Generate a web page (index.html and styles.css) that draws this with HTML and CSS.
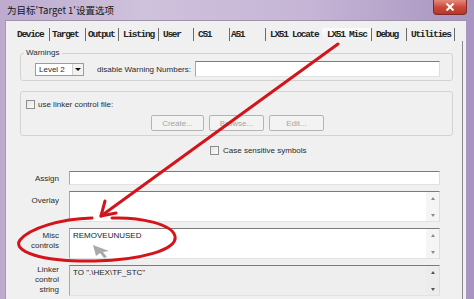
FILE: index.html
```html
<!DOCTYPE html>
<html lang="zh-CN">
<head>
    <meta charset="UTF-8">
    <title>为目标'Target 1'设置选项</title>
    <link rel="stylesheet" href="styles.css">
</head>
<body>

<div class="window">
    <div class="titlebar">
        <span class="title">为目标'Target 1'设置选项</span>
        <span class="close">
            <svg width="10" height="8" viewBox="0 0 10 8"><path d="M1.5 0.5 L8.5 7.5 M8.5 0.5 L1.5 7.5" stroke="#fff" stroke-width="2"/></svg>
        </span>
    </div>

    <div class="client">
        <div class="tabs">
            <span class="tab tab-device">Device</span>
            <span class="tab tab-target">Target</span>
            <span class="tab tab-output">Output</span>
            <span class="tab tab-listing">Listing</span>
            <span class="tab tab-user">User</span>
            <span class="tab tab-c51">C51</span>
            <span class="tab tab-a51">A51</span>
            <span class="tab tab-locate">LX51 Locate</span>
            <span class="tab tab-misc active">LX51 Misc</span>
            <span class="tab tab-debug">Debug</span>
            <span class="tab tab-utilities">Utilities</span>
        </div>

        <div class="panel">
            <fieldset class="group warnings">
                <legend>Warnings</legend>
                <div class="row">
                    <div class="combo">
                        <span class="combo-text">Level 2</span>
                        <span class="combo-btn"></span>
                    </div>
                    <span class="caption">disable Warning Numbers:</span>
                    <div class="edit edit-wide"></div>
                </div>
            </fieldset>

            <div class="group linker-file">
                <div class="check"><span class="box"></span>use linker control file:</div>
                <div class="buttons">
                    <button class="btn btn-create" disabled>Create...</button>
                    <button class="btn" disabled>Browse...</button>
                    <button class="btn" disabled>Edit...</button>
                </div>
            </div>

            <div class="check case"><span class="box"></span>Case sensitive symbols</div>

            <div class="fields">
                <div class="field">
                    <span class="field-label">Assign</span>
                    <div class="edit edit-single"></div>
                </div>
                <div class="field multi">
                    <span class="field-label label-overlay">Overlay</span>
                    <div class="edit edit-multi">
                        <div class="edit-text"></div>
                        <div class="scroll"><span class="up"></span><span class="down"></span></div>
                    </div>
                </div>
                <div class="field multi">
                    <span class="field-label label-misc">Misc<br>controls</span>
                    <div class="edit edit-multi">
                        <div class="edit-text">REMOVEUNUSED</div>
                        <div class="scroll"><span class="up"></span><span class="down"></span></div>
                    </div>
                </div>
                <div class="field multi">
                    <span class="field-label label-linker">Linker<br>control<br>string</span>
                    <div class="edit edit-multi readonly">
                        <div class="edit-text">TO ".\HEX\TF_STC"</div>
                        <div class="scroll"><span class="up"></span><span class="down"></span></div>
                    </div>
                </div>
            </div>
        </div>
    </div>

    <!-- red marks drawn over the dialog -->
    <svg class="annotation" width="474" height="299" viewBox="0 0 474 299">
        <g fill="none" stroke="#d3141b" stroke-width="3" stroke-linecap="round" stroke-linejoin="round">
            <path d="M338 44 L101 216"/>
            <path d="M105 201 L101 216 L116 213"/>
            <path d="M92 218 C60 219 30 228 20 240 C12 251 40 262 95 261 C140 260 178 250 175 236 C172 224 140 217 112 218"/>
        </g>
        <path d="M93 245 L109 251 L103 252 L107 257 L104 258 L100 253 L96 256 Z" fill="#7d7d7d" opacity="0.65"/>
    </svg>
</div>

</body>
</html>
```

FILE: styles.css
```css
* {
    box-sizing: border-box;
}

body {
    margin: 0;
    font-family: "Liberation Sans", Arial, sans-serif;
    font-size: 8px;
    color: #2b2b2b;
}

.window {
    position: relative;
    width: 474px;
    height: 299px;
    overflow: hidden;
    display: flex;
    flex-direction: column;
    background: linear-gradient(90deg, #bcaacf 0%, #cfc2dc 30%, #c6b5d6 65%, #a894c0 100%);
}

.titlebar {
    flex: none;
    height: 20px;
    display: flex;
    align-items: flex-start;
    padding-left: 7px;
}

.title {
    margin-top: 4px;
    font-family: "Noto Sans CJK SC", sans-serif;
    font-size: 9.5px;
    line-height: 12px;
    color: #151515;
}

.close {
    margin-left: auto;
    margin-right: 7px;
    width: 34px;
    height: 15px;
    display: flex;
    align-items: center;
    justify-content: center;
    background: linear-gradient(#e48a7b, #cc4a3c 50%, #b7352b);
    border: 1px solid #7e2b27;
    border-top: none;
    border-radius: 0 0 4px 4px;
}

.client {
    flex: 1;
    margin: 0 8px 0 5px;
    display: flex;
    flex-direction: column;
    background: #f0f0f0;
    border-top: 1px solid #9d93aa;
    border-left: 1px solid #a698b7;
}

/* tab strip */
.tabs {
    flex: none;
    display: flex;
    padding: 7px 0 0 6px;
    height: 20px;
}

.tab {
    height: 13px;
    line-height: 13px;
    padding-left: 4px;
    border-right: 1px solid #6a6a6a;
    font-family: "Liberation Mono", "DejaVu Sans Mono", monospace;
    font-size: 9.5px;
    font-weight: bold;
    letter-spacing: -1.3px;
    color: #222;
    white-space: nowrap;
}

.tab-device { width: 38px; padding-left: 5px; }
.tab-target { width: 36px; padding-left: 2px; }
.tab-output { width: 33px; padding-left: 2px; }
.tab-listing { width: 40px; }
.tab-user { width: 35px; }
.tab-c51 { width: 36px; }
.tab-a51 { width: 36px; padding-left: 1px; }
.tab-locate { width: 56px; border-right: none; }
.tab-misc { width: 50px; padding-left: 5px; }
.tab-debug { width: 35px; }
.tab-utilities { width: 48px; }

.tab.active {
    background: linear-gradient(#fbfbfb, #f0f0f0);
}

/* property page */
.panel {
    flex: 1;
    margin-right: 3px;
    padding: 0 9px 0 14px;
    border-right: 1px solid #8a8a8a;
}

.group {
    margin: 0;
    border: 1px solid #d3d3d3;
    border-radius: 3px;
}

.warnings {
    margin-top: 7px;
    padding: 3px 12px 3px 14px;
}

.warnings legend {
    margin-left: -11px;
    padding: 0 2px;
    line-height: 10px;
}

.row {
    display: flex;
    align-items: center;
    height: 16px;
}

.combo {
    flex: none;
    display: flex;
    align-items: center;
    width: 49px;
    height: 13px;
    background: #fff;
    border: 1px solid #9c9c9c;
}

.combo-text {
    flex: 1;
    padding-left: 3px;
}

.combo-btn {
    width: 11px;
    height: 11px;
    display: flex;
    align-items: center;
    justify-content: center;
    background: #f2f2f2;
    border-left: 1px solid #d0d0d0;
}

.combo-btn::after {
    content: "";
    border-left: 3px solid transparent;
    border-right: 3px solid transparent;
    border-top: 3px solid #111;
}

.caption {
    margin-left: 13px;
    white-space: nowrap;
}

.edit {
    background: #fff;
    border-top: 1px solid #7b7b7b;
    border-left: 1px solid #a9a9a9;
    border-right: 1px solid #dedede;
    border-bottom: 1px solid #e2e2e2;
}

.edit-wide {
    flex: 1;
    margin-left: 4px;
    height: 16px;
}

.linker-file {
    margin-top: 10px;
    padding: 7px 0 4px 5px;
}

.check {
    display: flex;
    align-items: center;
    height: 10px;
    gap: 3px;
}

.box {
    width: 9px;
    height: 9px;
    background: linear-gradient(135deg, #e4e4e4, #fdfdfd);
    border: 1px solid #8e8e8e;
}

.buttons {
    display: flex;
    gap: 5px;
    margin-top: 6px;
    padding-left: 125px;
}

.btn {
    width: 55px;
    height: 16px;
    padding: 0;
    font-family: inherit;
    font-size: 8px;
    color: #a4a4a4;
    background: #f3f3f3;
    border: 1px solid #b4b4b4;
    border-radius: 2px;
}

.btn-create {
    width: 53px;
}

.case {
    margin-top: 9px;
    padding-left: 190px;
    gap: 4px;
}

.fields {
    margin-top: 16px;
}

.field {
    display: flex;
    gap: 10px;
}

.field.multi {
    margin-top: 6px;
}

.field-label {
    width: 39px;
    flex: none;
    text-align: right;
    line-height: 10px;
}

.field:first-child .field-label {
    align-self: center;
    padding-top: 2px;
}

.label-overlay { padding-top: 5px; }
.label-misc { padding-top: 3px; }
.label-linker { padding-top: 0; }

.edit-single {
    width: 371px;
    height: 14px;
}

.edit-multi {
    display: flex;
    width: 371px;
    height: 31px;
}

.edit-multi.readonly {
    background: #eeeeee;
}

.edit-text {
    flex: 1;
    padding: 2px 3px;
    line-height: 10px;
    color: #222;
}

.scroll {
    width: 13px;
    display: flex;
    flex-direction: column;
    justify-content: space-between;
    align-items: center;
    padding: 5px 0 4px;
    background: #f5f5f5;
}

.readonly .scroll {
    background: #ececec;
}

.up {
    border-left: 2.5px solid transparent;
    border-right: 2.5px solid transparent;
    border-bottom: 3px solid #8a8a8a;
}

.down {
    border-left: 2.5px solid transparent;
    border-right: 2.5px solid transparent;
    border-top: 3px solid #8a8a8a;
}

.readonly .up,
.readonly .down {
    border-top-color: #555;
    border-bottom-color: #555;
}

.annotation {
    position: absolute;
    left: 0;
    top: 0;
    pointer-events: none;
}
```
